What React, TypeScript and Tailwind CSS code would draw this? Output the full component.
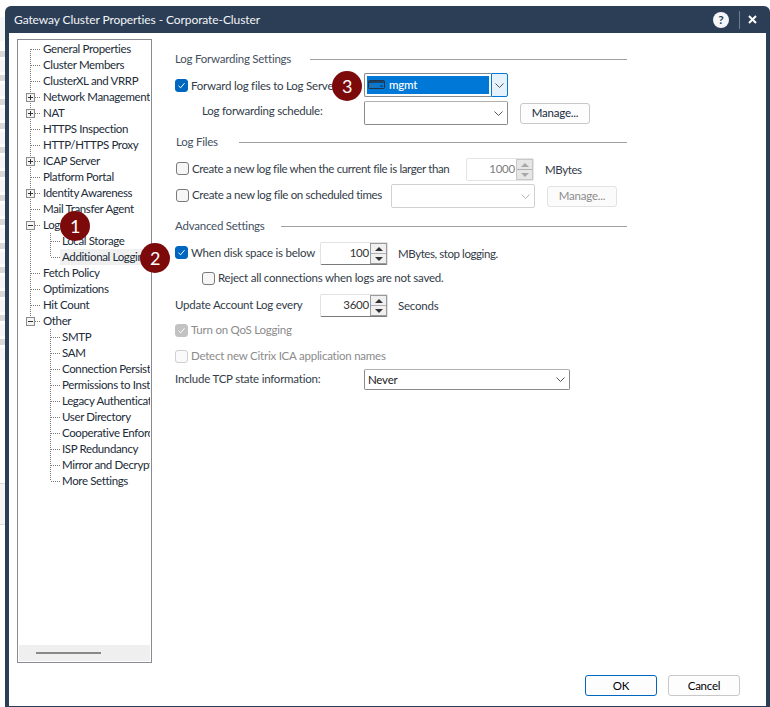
import React from "react";

const dark = "#2c3e56";

function Check({ state = "off", className = "" }: { state?: "on" | "off" | "dison" | "disoff"; className?: string }) {
  const cls =
    state === "on"
      ? "bg-[#0067c0] border-[#0067c0]"
      : state === "off"
      ? "bg-[#f6f6f6] border-[#7a7a7a]"
      : state === "dison"
      ? "bg-[#c2c2c2] border-[#c2c2c2]"
      : "bg-[#fafafa] border-[#cfcfcf]";
  return (
    <span className={`flex items-center justify-center w-[13px] h-[13px] rounded-[3px] border shrink-0 ${cls} ${className}`}>
      {(state === "on" || state === "dison") && (
        <svg width="9" height="9" viewBox="0 0 9 9" fill="none" stroke="#ffffff" strokeWidth="1">
          <path d="M1.5 4.8 L3.6 6.8 L7.5 2.2" />
        </svg>
      )}
    </span>
  );
}

function Chevron({ color = "#555" }: { color?: string }) {
  return (
    <svg width="9" height="5" viewBox="0 0 9 5" fill="none" stroke={color} strokeWidth="1">
      <path d="M0.5 0.5 L4.5 4.5 L8.5 0.5" />
    </svg>
  );
}

function Header({ text, w, className = "", pl = "" }: { text: string; w: string; className?: string; pl?: string }) {
  return (
    <div className={`flex items-center h-4 ${className}`}>
      <span className={`${w} ${pl} shrink-0 text-[#45505f]`}>{text}</span>
      <span className="flex-1 h-px bg-[#a0a0a0]" />
    </div>
  );
}

function Spin({ value, disabled = false }: { value: string; disabled?: boolean }) {
  return (
    <div className={`flex w-[68px] h-[23px] border rounded-[2px] ${disabled ? "border-[#e4e4e4]" : "border-[#e2e2e2] border-b-[#7a7a7a]"}`}>
      <span className={`flex-1 text-right pr-[1px] leading-[20px] ${disabled ? "text-[#7d7d7d]" : "text-[#333]"}`}>{value}</span>
      <div className={`flex flex-col w-[17px] border ${disabled ? "border-[#c8c8c8] bg-[#e6e6e6]" : "border-[#9a9a9a] bg-[#f0f0f0]"}`}>
        <span className="flex-1 flex items-center justify-center border-b border-[#b0b0b0]">
          <span className={`w-0 h-0 border-x-[4px] border-x-transparent border-b-[4px] ${disabled ? "border-b-[#a8a8a8]" : "border-b-[#333]"}`} />
        </span>
        <span className="flex-1 flex items-center justify-center">
          <span className={`w-0 h-0 border-x-[4px] border-x-transparent border-t-[4px] ${disabled ? "border-t-[#a8a8a8]" : "border-t-[#333]"}`} />
        </span>
      </div>
    </div>
  );
}

function Combo({ w, disabled = false, text, h = "h-6" }: { w: string; disabled?: boolean; text?: string; h?: string }) {
  return (
    <div className={`flex items-center justify-between pl-[3px] pr-[4px] ${w} ${h} border rounded-[2px] ${disabled ? "border-[#d0d0d0]" : "border-[#8a8a8a] border-t-[#b0b0b0]"} bg-white`}>
      <span className="text-[#222]">{text}</span>
      <Chevron color={disabled ? "#b5b5b5" : "#555"} />
    </div>
  );
}

function Btn({ text, className = "", disabled = false, primary = false }: { text: string; className?: string; disabled?: boolean; primary?: boolean }) {
  return (
    <div
      className={`flex items-center justify-center h-[21px] rounded-[3px] border ${
        primary ? "border-[#0067c0] bg-[#fdfdfd] text-black" : disabled ? "border-[#e2e2e2] bg-[#fbfbfb] text-[#8c8c8c]" : "border-[#c8c8c8] bg-[#fdfdfd] text-[#1a2a40]"
      } ${className}`}
    >
      {text}
    </div>
  );
}

function Badge({ n, className }: { n: string; className: string }) {
  return (
    <span className={`absolute flex items-center justify-center w-[30px] h-[30px] rounded-full bg-[#7d0a0a] text-white text-[18px] ${className}`}>
      {n}
    </span>
  );
}

type Row = {
  t: string;
  level?: 0 | 1;
  exp?: "+" | "-";
  parentLine?: boolean;
  childLast?: boolean;
  selected?: boolean;
};

const rows: Row[] = [
  { t: "General Properties" },
  { t: "Cluster Members" },
  { t: "ClusterXL and VRRP" },
  { t: "Network Management", exp: "+" },
  { t: "NAT", exp: "+" },
  { t: "HTTPS Inspection" },
  { t: "HTTP/HTTPS Proxy" },
  { t: "ICAP Server", exp: "+" },
  { t: "Platform Portal" },
  { t: "Identity Awareness", exp: "+" },
  { t: "Mail Transfer Agent" },
  { t: "Logs", exp: "-" },
  { t: "Local Storage", level: 1, parentLine: true },
  { t: "Additional Logging", level: 1, parentLine: true, childLast: true, selected: true },
  { t: "Fetch Policy" },
  { t: "Optimizations" },
  { t: "Hit Count" },
  { t: "Other", exp: "-" },
  { t: "SMTP", level: 1 },
  { t: "SAM", level: 1 },
  { t: "Connection Persistence", level: 1 },
  { t: "Permissions to Install", level: 1 },
  { t: "Legacy Authentication", level: 1 },
  { t: "User Directory", level: 1 },
  { t: "Cooperative Enforcement", level: 1 },
  { t: "ISP Redundancy", level: 1 },
  { t: "Mirror and Decrypt", level: 1 },
  { t: "More Settings", level: 1, childLast: true },
];

function Guides({ r, i }: { r: Row; i: number }) {
  const lv = r.level ?? 0;
  const isFirst = i === 0;
  const isLastTop = r.t === "Other";
  const w = lv === 0 ? 23 : 42;
  return (
    <svg width={w} height="16" className="shrink-0" fill="none" stroke="#7a7a7a" strokeDasharray="1 1" strokeWidth="1" shapeRendering="crispEdges">
      {lv === 0 && (
        <>
          <path d={`M12.5 ${isFirst ? 8 : 0} V${isLastTop ? 8 : 16}`} />
          <path d="M13 8.5 H23" />
        </>
      )}
      {lv === 1 && (
        <>
          {r.parentLine && <path d="M12.5 0 V16" />}
          <path d={`M32.5 0 V${r.childLast ? 8 : 16}`} />
          <path d="M33 8.5 H43" />
        </>
      )}
      {r.exp && (
        <g strokeDasharray="none">
          <rect x="8.5" y="4.5" width="8" height="8" fill="#f4f4f4" stroke="#8a8a8a" />
          <path d="M10 8.5 H15" stroke="#333" />
          {r.exp === "+" && <path d="M12.5 6 V11" stroke="#333" />}
        </g>
      )}
    </svg>
  );
}

const bands = [0, 1, 2, 3, 4, 5, 6, 7, 8, 9, 10, 11, 12];

export default function App() {
  return (
    <div
      className="relative w-[770px] h-[707px] overflow-hidden bg-white flex text-[11.5px] tracking-[-0.23px] leading-4"
      style={{ fontFamily: "Lato, Roboto, sans-serif" }}
    >
      {/* what shows of the page behind the dialog */}
      <div className="w-[5px] shrink-0 flex flex-col">
        <div className="h-[17px] shrink-0 bg-white" />
        <div className="h-6 shrink-0 bg-[#f5f6f8]" />
        <div className="h-[10px] shrink-0 bg-white" />
        {bands.map((b) => (
          <div key={b} className="h-6 shrink-0 flex flex-col">
            <div className="h-[6px] bg-[#d9d9d9]" />
            <div className="h-[3px] bg-white" />
            <div className="h-[12px] bg-[#f5f6f8]" />
            <div className="h-[3px] bg-white" />
          </div>
        ))}
        <div className="h-[120px] shrink-0 bg-white" />
        <div className="h-[42px] shrink-0 bg-[#f5f5f5] border-y border-[#dcdcdc]" />
      </div>
      <div className="relative w-[765px] h-[701px] mt-[6px] flex flex-col rounded-t-[6px] overflow-hidden" style={{ backgroundColor: dark }}>
        {/* title bar */}
        <div className="flex items-center h-[27px] pl-[9px] pr-[13px] text-white shrink-0">
          <span className="flex-1 text-[#f2f4f7] text-[12px] tracking-[-0.09px]">Gateway Cluster Properties - Corporate-Cluster</span>
          <span className="flex items-center justify-center w-4 h-4 rounded-full bg-[#f4f6f9] text-[#2c3e56] text-[12px] font-bold leading-none">?</span>
          <span className="w-px h-[18px] bg-[#6d7c90] ml-[10px] mr-[8px]" />
          <svg width="9" height="9" viewBox="0 0 9 9" stroke="#ffffff" strokeWidth="2">
            <path d="M1 1 L8 8 M8 1 L1 8" />
          </svg>
        </div>
        {/* body */}
        <div className="flex flex-1 ml-[4px] mr-[4px] mb-px bg-white">
          {/* tree */}
          <div className="flex flex-col justify-between mt-[6px] ml-[8px] w-[135px] h-[624px] border border-[#8a8a92] shrink-0">
            <div className="pt-[1px] overflow-hidden">
              {rows.map((r, i) => (
                <div key={r.t} className="flex items-center h-4 whitespace-nowrap text-[#222b38] tracking-[-0.36px]">
                  <Guides r={r} i={i} />
                  <span className={`pl-[2px] flex-1 overflow-hidden mr-px ${r.selected ? "bg-[#f0f0f0]" : ""}`}>{r.t}</span>
                </div>
              ))}
            </div>
            <div className="flex items-center h-4 mx-[1px] mb-[1px] pl-[17px] bg-[#efefef]">
              <span className="w-[65px] h-[2px] bg-[#888888]" />
            </div>
          </div>
          {/* settings */}
          <div className="relative flex-1 flex flex-col">
            <div className="w-[452px] ml-[23px] pt-[18px] text-[#333c48]">
              <Header text="Log Forwarding Settings" w="w-[135px]" />
              <div className="flex items-center h-6 mt-[6px]">
                <div className="flex items-center w-[189px]">
                  <Check state="on" />
                  <span className="ml-[3px] pt-[2px] whitespace-nowrap">Forward log files to Log Server</span>
                </div>
                <div className="flex w-[144px] h-6">
                  <div className="flex-1 border border-[#8a8a8a] border-r-0 rounded-l-[2px] p-[2px]">
                    <div className="flex items-center h-[18px] pl-[1px] bg-[#0078d7] text-white font-medium">
                      <svg width="17" height="10" viewBox="0 0 17 10" fill="none" stroke="#26323f" strokeWidth="1">
                        <rect x="0.5" y="0.5" width="16" height="8" rx="1" />
                        <path d="M0.5 2 H16.5" strokeWidth="1.5" />
                        <path d="M2 6 H9" stroke="#5b6b7c" />
                        <path d="M12 6 H15" />
                      </svg>
                      <span className="ml-[4px]">mgmt</span>
                    </div>
                  </div>
                  <div className="flex items-center justify-center w-[17px] bg-[#e5f1fb] border border-[#0078d7] rounded-r-[2px]">
                    <Chevron />
                  </div>
                </div>
              </div>
              <div className="flex items-center h-6 mt-1">
                <span className="w-[189px] pl-[27px] pb-[4px]">Log forwarding schedule:</span>
                <Combo w="w-[144px]" />
                <Btn text="Manage..." className="ml-3 w-[70px]" />
              </div>
              <Header text="Log Files" w="w-[64px]" pl="pl-px" className="mt-[9px]" />
              <div className="flex items-center h-[23px] mt-2 pl-px">
                <div className="flex items-center w-[290px] pb-[2px]">
                  <Check />
                  <span className="ml-[3px] whitespace-nowrap tracking-[-0.37px]">Create a new log file when the current file is larger than</span>
                </div>
                <Spin value="1000" disabled />
                <span className="ml-[11px] tracking-[-0.4px]">MBytes</span>
              </div>
              <div className="flex items-center h-6 mt-[3px] pl-px">
                <div className="flex items-center w-[215px] pb-[2px]">
                  <Check />
                  <span className="ml-[3px] whitespace-nowrap tracking-[-0.33px]">Create a new log file on scheduled times</span>
                </div>
                <Combo w="w-[144px]" disabled />
                <Btn text="Manage..." disabled className="ml-3 w-[70px]" />
              </div>
              <Header text="Advanced Settings" w="w-[106px]" className="mt-[10px]" />
              <div className="flex items-center h-[23px] mt-2">
                <div className="flex items-center w-[145px] pb-[2px]">
                  <Check state="on" />
                  <span className="ml-[3px] whitespace-nowrap">When disk space is below</span>
                </div>
                <Spin value="100" />
                <span className="ml-[10px] tracking-[-0.42px]">MBytes, stop logging.</span>
              </div>
              <div className="flex items-center h-4 mt-[5px] pl-[27px]">
                <Check />
                <span className="ml-[3px]">Reject all connections when logs are not saved.</span>
              </div>
              <div className="flex items-center h-[23px] mt-2">
                <span className="w-[145px] pb-[2px]">Update Account Log every</span>
                <Spin value="3600" />
                <span className="ml-[10px]">Seconds</span>
              </div>
              <div className="flex items-center h-4 mt-[5px] text-[#8b8b8b]">
                <Check state="dison" />
                <span className="ml-[3px]">Turn on QoS Logging</span>
              </div>
              <div className="flex items-center h-4 mt-[10px] text-[#8b8b8b]">
                <Check state="disoff" />
                <span className="ml-[3px]">Detect new Citrix ICA application names</span>
              </div>
              <div className="flex items-center h-[21px] mt-[5px]">
                <span className="w-[189px] pb-[2px]">Include TCP state information:</span>
                <Combo w="w-[206px]" text="Never" h="h-[21px]" />
              </div>
            </div>
            <div className="mt-auto mb-[10px] ml-[433px] flex gap-[11px]">
              <Btn text="OK" primary className="w-[72px]" />
              <Btn text="Cancel" className="w-[72px] !text-black" />
            </div>
          </div>
        </div>
      </div>
      <Badge n="1" className="left-[60px] top-[211px]" />
      <Badge n="2" className="left-[140px] top-[243px]" />
      <Badge n="3" className="left-[332px] top-[71px]" />
    </div>
  );
}
